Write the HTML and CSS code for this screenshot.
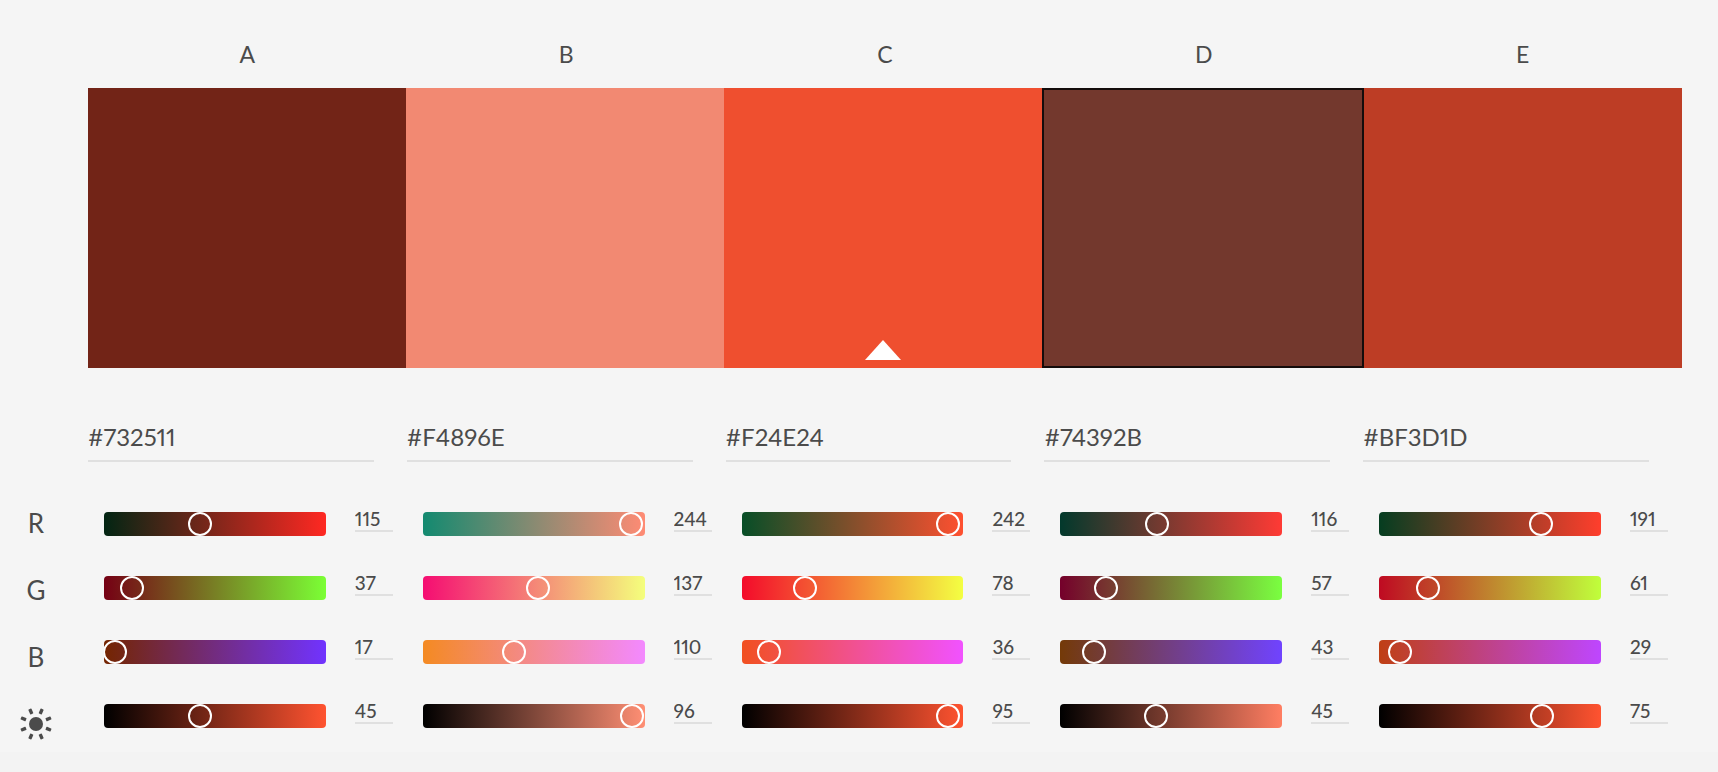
FILE: index.html
```html
<!DOCTYPE html>
<html lang="en">
<head>
<meta charset="utf-8">
<title>Color theme</title>
<link rel="stylesheet" href="styles.css">
</head>
<body>
<main>
    <!-- letters, swatches and hex codes -->
    <div class="theme">
        <div class="names columns">
            <label for="hexA">A</label>
            <label for="hexB">B</label>
            <label for="hexC">C</label>
            <label for="hexD">D</label>
            <label for="hexE">E</label>
        </div>
        <div class="swatches">
            <button class="swatch a" aria-label="Color A"></button>
            <button class="swatch b" aria-label="Color B"></button>
            <button class="swatch c base" aria-label="Color C"></button>
            <button class="swatch d selected" aria-label="Color D"></button>
            <button class="swatch e" aria-label="Color E"></button>
        </div>
        <div class="codes columns">
            <input type="text" id="hexA" value="#732511">
            <input type="text" id="hexB" value="#F4896E">
            <input type="text" id="hexC" value="#F24E24">
            <input type="text" id="hexD" value="#74392B">
            <input type="text" id="hexE" value="#BF3D1D">
        </div>
    </div>

    <div class="mixer">
        <div class="channels">
            <span>R</span>
            <span>G</span>
            <span>B</span>
            <svg viewBox="-16 -16 32 32" role="img" aria-label="Brightness">
                <circle r="7"/>
                <g id="rays"></g>
            </svg>
        </div>
        <div class="sliders columns" id="sliders"></div>
    </div>
</main>

<script>
// value, left color, right color for R, G, B and brightness
var colors = {
    A: [[115, '#022513', '#ff2822'], [37, '#750014', '#7bff35'], [17, '#742500', '#7133ff'], [45, '#000000', '#ff5330']],
    B: [[244, '#138a70', '#ff8b74'], [137, '#f50d72', '#f4ff7c'], [110, '#f48a22', '#f389ff'], [96, '#000000', '#ff8f74']],
    C: [[242, '#074e27', '#ff5030'], [78, '#f30b2b', '#f3ff42'], [36, '#f15020', '#f152ff'], [95, '#000000', '#ff5330']],
    D: [[116, '#02392c', '#ff3a35'], [57, '#75002b', '#7aff40'], [43, '#743a08', '#7043ff'], [45, '#000000', '#ff7e62']],
    E: [[191, '#053d20', '#ff3e2c'], [61, '#bf0a22', '#c0ff3b'], [29, '#bf3f14', '#be46ff'], [75, '#000000', '#ff5330']]
};
var channels = ['red', 'green', 'blue', 'brightness'];
var html = '';

for (var name in colors) {
    html += '<div class="group">';
    colors[name].forEach(function(c, i) {
        var label = name + ' ' + channels[i];
        var max = i == 3 ? 100 : 255;
        html += '<div class="row">' +
            '<div class="track" style="background-image: linear-gradient(to right, ' + c[1] + ', ' + c[2] + ')">' +
            '<input type="range" min="0" max="' + max + '" value="' + c[0] + '" aria-label="' + label + '"></div>' +
            '<input type="text" class="value" value="' + c[0] + '" aria-label="' + label + ' value">' +
            '</div>';
    });
    html += '</div>';
}
document.getElementById('sliders').innerHTML = html;

// keep slider and number together
document.querySelectorAll('.row').forEach(function(row) {
    var range = row.querySelector('[type=range]');
    var value = row.querySelector('.value');
    range.oninput = function() { value.value = range.value; };
    value.onchange = function() { range.value = value.value; };
});

var rays = '';
for (var i = 0; i < 8; i++) {
    rays += '<rect x="-1.7" y="-16.2" width="3.4" height="5.4" rx="0.6" transform="rotate(' + (22.5 + i * 45) + ')"/>';
}
document.getElementById('rays').innerHTML = rays;
</script>
</body>
</html>
```

FILE: styles.css
```css
body {
    margin: 0;
    background: #f3f3f3;
    color: #4b4b4b;
    font-family: Lato, "Open Sans", sans-serif;
    font-variant-numeric: proportional-nums;
}

main {
    padding: 38px 36px 12px 0;
    background: #f5f5f5;
}

input, button {
    margin: 0;
    padding: 0;
    border: 0;
    border-radius: 0;
    background: none;
    color: inherit;
    font: inherit;
    font-variant-numeric: inherit;
}

.columns {
    display: grid;
    grid-template-columns: repeat(5, minmax(0, 1fr));
}

.theme {
    margin-left: 88px;
}

.names {
    margin-bottom: 18px;
    font-size: 23px;
    line-height: 32px;
    text-align: center;
}

/* Swatches */
.swatches {
    display: flex;
    height: 280px;
}

.swatch {
    box-sizing: content-box;
    flex: 1;
    position: relative;
    cursor: pointer;
}

.swatch.a { background: #722417; }
.swatch.b { background: #f28972; }
.swatch.c { background: #ef4f2f; }
.swatch.d { background: #73382d; }
.swatch.e { background: #bd3d25; }

.swatch.selected {
    border: 2px solid #140c0b;
}

/* white marker of the base color */
.swatch.base::after {
    content: "";
    position: absolute;
    left: 50%;
    bottom: 8px;
    width: 36px;
    height: 20px;
    margin-left: -18px;
    background: white;
    clip-path: polygon(50% 0, 100% 100%, 0 100%);
}

.codes {
    margin: 44px 0;
}

.codes input {
    height: 48px;
    margin-right: 33px;
    border-bottom: 2px solid #e0e0e0;
    font-size: 24px;
    min-width: 0;
}

/* Sliders */
.mixer {
    display: flex;
}

.channels {
    display: flex;
    flex-direction: column;
    gap: 35px;
    width: 32px;
    margin: 1px 36px 0 20px;
    font-size: 26px;
    line-height: 32px;
    text-align: center;
}

.channels svg {
    width: 32px;
    height: 32px;
    fill: #4b4b4b;
    overflow: visible;
}

.sliders {
    flex: 1;
}

.group {
    display: flex;
    flex-direction: column;
    gap: 34px;
    padding: 0 14px 0 16px;
}

.row {
    display: flex;
    height: 30px;
    gap: 29px;
}

.track {
    flex: 1;
    align-self: flex-end;
    height: 24px;
    border-radius: 4px;
    overflow: hidden;
}

.track input {
    -webkit-appearance: none;
    appearance: none;
    display: block;
    width: calc(100% + 24px);
    height: 24px;
    margin-left: -16px;
    cursor: pointer;
}

.track input::-webkit-slider-thumb {
    -webkit-appearance: none;
    box-sizing: border-box;
    width: 24px;
    height: 24px;
    border: 2px solid white;
    border-radius: 50%;
    background: transparent;
}

.value {
    width: 38px;
    height: 24px;
    border-bottom: 2px solid #e0e0e0;
    font-size: 19px;
    font-weight: 500;
}
```
